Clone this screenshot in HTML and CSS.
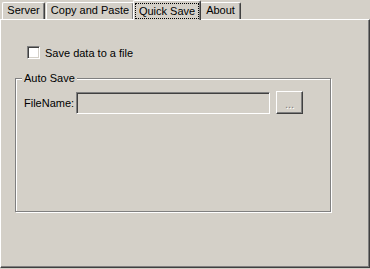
FILE: index.html
```html
<!DOCTYPE html>
<html lang="en">
<head>
  <meta charset="UTF-8">
  <title>Quick Save</title>
  <link rel="stylesheet" href="styles.css">
</head>
<body>
<div class="tabs">
  <div class="tab tab-server">Server</div>
  <div class="tab tab-copy">Copy and Paste</div>
  <div class="tab tab-active"><span class="focus">Quick Save</span></div>
  <div class="tab tab-about">About</div>
</div>
<div class="panel">
  <label class="check-row">
    <span class="checkbox"></span>
    Save data to a file
  </label>
  <div class="group">
    <span class="legend">Auto Save</span>
    <div class="file-row">
      <span class="file-label">FileName:</span>
      <span class="text-input"></span>
      <span class="btn"><span class="dots">...</span></span>
    </div>
  </div>
</div>
</body>
</html>
```

FILE: styles.css
```css
html {
    --face: #d4d0c8;
    --light: #ffffff;
    --shadow: #808080;
    --dark: #404040;
}

body {
    margin: 0;
    background: var(--face);
    font-family: "Liberation Sans", Arial, sans-serif;
    font-size: 11px;
    color: #000;
    width: 370px;
    height: 269px;
    overflow: hidden;
}

.tabs {
    display: flex;
    align-items: flex-end;
    height: 19px;
    padding-left: 2px;
}

.tab {
    height: 17px;
    line-height: 15px;
    text-align: center;
    border-top: 1px solid var(--light);
    border-left: 1px solid var(--light);
    border-right: 1px solid var(--dark);
    box-shadow: inset -1px 0 0 var(--shadow);
    border-radius: 2px 2px 0 0;
    box-sizing: border-box;
    white-space: nowrap;
}

.tab-server {
    width: 43px;
}

.tab-copy {
    width: 88px;
    margin-left: 1px;
}

.tab-about {
    width: 41px;
}

.tab-active {
    width: 68px;
    height: 20px;
    margin-bottom: -1px;
    margin-left: -1px;
    margin-right: -1px;
    padding: 2px 1px 0 1px;
    background: var(--face);
    position: relative;
    z-index: 1;
}

.focus {
    display: block;
    border: 1px dotted #000;
    line-height: 14px;
}

.panel {
    height: 249px;
    width: 370px;
    box-sizing: border-box;
    border-top: 1px solid var(--light);
    border-left: 1px solid var(--light);
    border-right: 1px solid var(--dark);
    border-bottom: 1px solid var(--dark);
    box-shadow: inset -1px -1px 0 var(--shadow);
    padding: 26px 0 0 14px;
}

.check-row {
    display: flex;
    align-items: center;
    gap: 5px;
    margin-left: 12px;
    height: 13px;
}

.checkbox {
    width: 13px;
    height: 13px;
    box-sizing: border-box;
    background: #fff;
    border: 1px solid;
    border-color: var(--shadow) var(--light) var(--light) var(--shadow);
    box-shadow: inset 1px 1px 0 var(--dark), inset -1px -1px 0 var(--face);
}

.group {
    position: relative;
    margin-top: 19px;
    width: 316px;
    height: 134px;
    box-sizing: border-box;
    border: 1px solid var(--shadow);
    box-shadow: 1px 1px 0 var(--light), inset 1px 1px 0 var(--light);
    padding: 12px 0 0 8px;
}

.legend {
    position: absolute;
    top: -8px;
    left: 6px;
    padding: 0 2px;
    background: var(--face);
    line-height: 14px;
}

.file-row {
    display: flex;
    align-items: center;
}

.file-label {
    width: 52px;
}

.text-input {
    width: 194px;
    height: 22px;
    box-sizing: border-box;
    border: 1px solid;
    border-color: var(--shadow) var(--light) var(--light) var(--shadow);
    box-shadow: inset 1px 1px 0 var(--dark);
    background: var(--face);
}

.btn {
    margin-left: 6px;
    width: 27px;
    height: 23px;
    box-sizing: border-box;
    border: 1px solid;
    border-color: var(--light) var(--dark) var(--dark) var(--light);
    box-shadow: inset -1px -1px 0 var(--shadow);
    display: flex;
    align-items: center;
    justify-content: center;
}

.dots {
    color: var(--shadow);
    text-shadow: 1px 1px 0 var(--light);
    line-height: 10px;
    margin-top: 2px;
}
```
